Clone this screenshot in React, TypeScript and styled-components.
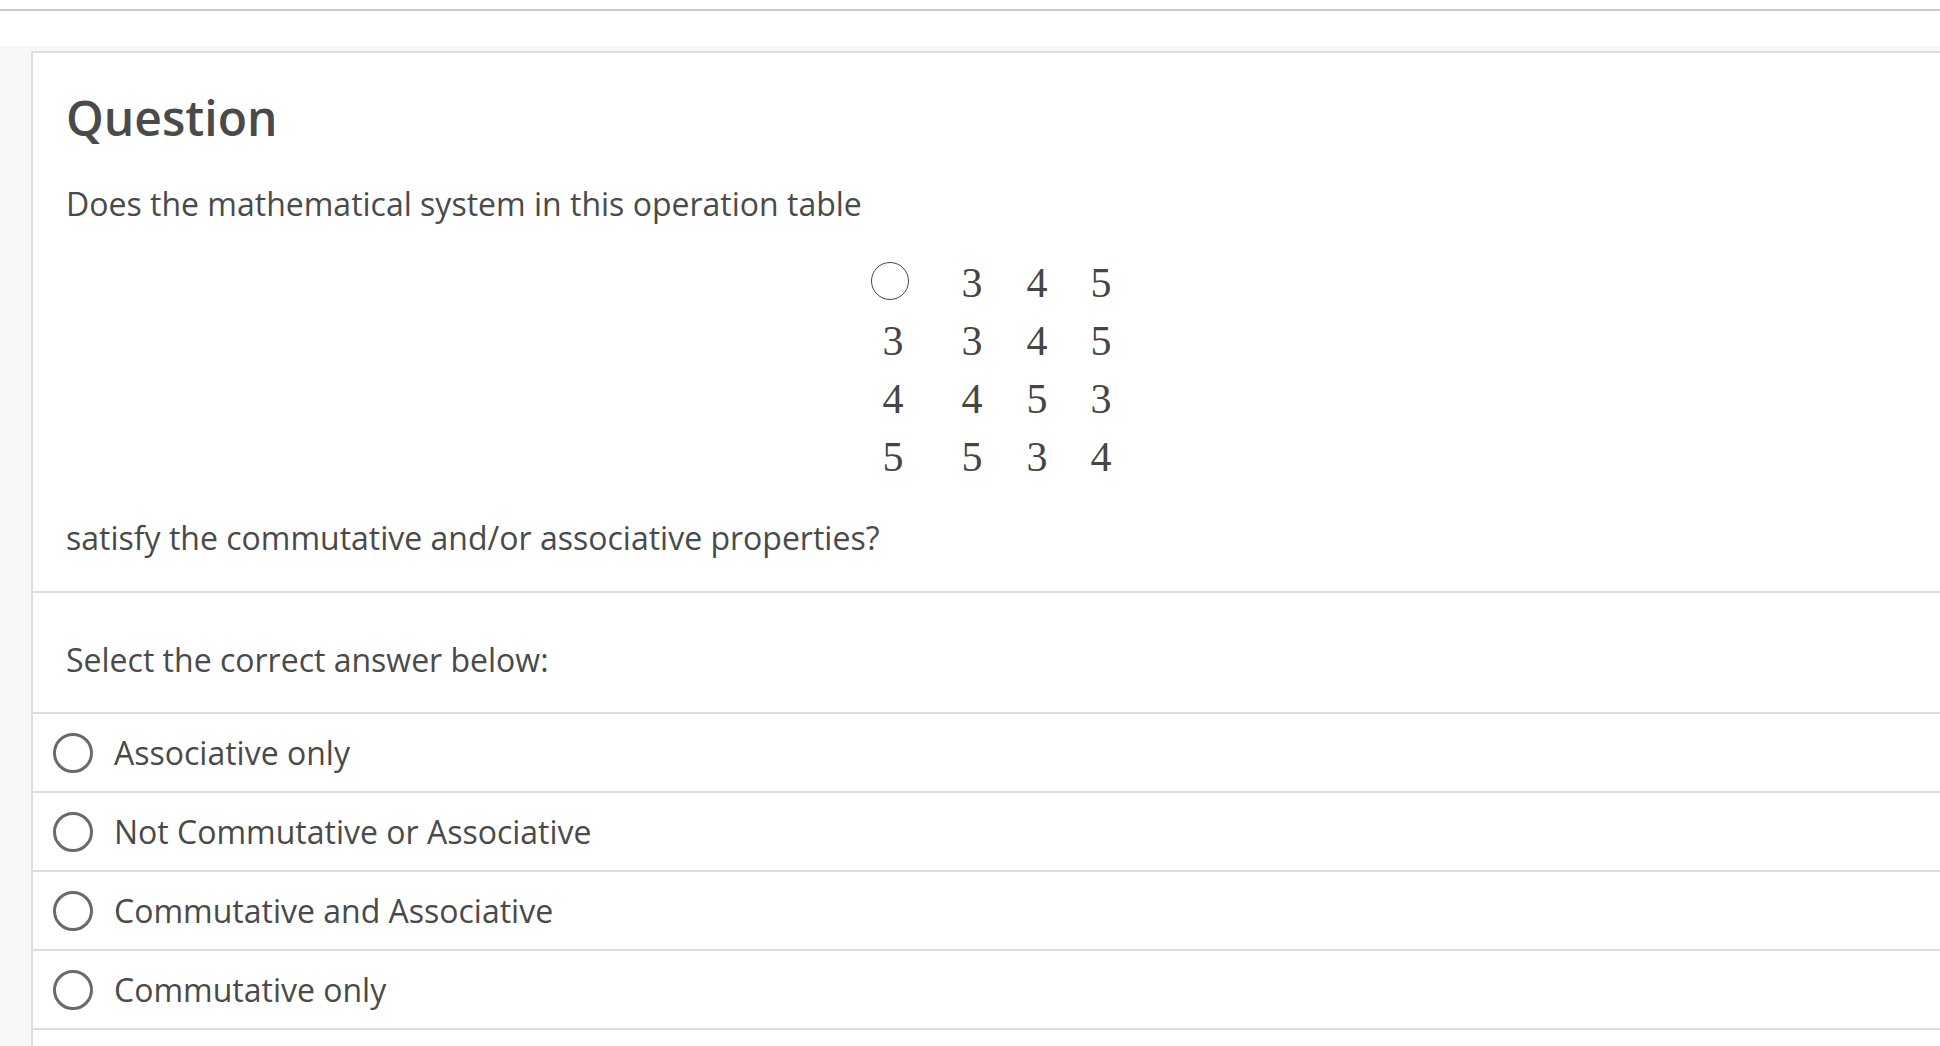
import React from "react";
import styled, { createGlobalStyle } from "styled-components";

const GlobalStyle = createGlobalStyle`
  html, body {
    margin: 0;
    padding: 0;
    background: #ffffff;
    overflow: hidden;
  }
  body {
    font-family: "Open Sans", "Noto Sans", sans-serif;
    color: #4a4a4a;
  }
`;

const TopBar = styled.div`
  height: 9px;
  border-bottom: 2px solid #c8cacd;
  background: #ffffff;
`;

const Stage = styled.main`
  margin-top: 35px;
  background: #f7f7f7;
  padding: 5px 0 0 31px;
  min-height: 1100px;
`;

const Card = styled.section`
  background: #ffffff;
  border: 2px solid #dddddd;
  border-radius: 3px 0 0 0;
  margin-right: -9px;
  min-height: 1100px;
`;

const QuestionBlock = styled.div`
  padding: 36px 33px 29px;
`;

const Title = styled.h2`
  margin: 0;
  font-size: 48px;
  line-height: 58px;
  font-weight: 600;
  color: #4a4a4a;
`;

const Prompt = styled.p<{ $top?: number }>`
  margin: ${(p) => p.$top ?? 0}px 0 0;
  font-size: 32px;
  line-height: 48px;
  font-weight: 400;
  color: #4a4a4a;
`;

const OpTable = styled.div`
  display: grid;
  grid-template-columns: 92px 66px 64px 64px;
  grid-auto-rows: 58px;
  width: 286px;
  margin: 26px auto 28px;
  font-family: "Liberation Serif", "Times New Roman", serif;
  font-size: 42px;
  line-height: 58px;
  color: #454545;
`;

const Cell = styled.span`
  display: flex;
  justify-content: center;
  align-items: center;
`;

const OpCircle = styled.span`
  display: block;
  width: 36px;
  height: 36px;
  margin: 0 6px 4px 0;
  border: 1.3px solid #454545;
  border-radius: 50%;
`;

const AnswerHeader = styled.div`
  border-top: 2px solid #dddddd;
  padding: 43px 33px 28px;
  font-size: 32px;
  line-height: 48px;
  color: #4a4a4a;
`;

const OptionList = styled.ul`
  list-style: none;
  margin: 0;
  padding: 0;
  border-bottom: 2px solid #dddddd;
`;

const Option = styled.li`
  display: flex;
  align-items: center;
  gap: 21px;
  height: 77px;
  padding-left: 20px;
  border-top: 2px solid #dddddd;
  font-size: 32px;
  color: #4a4a4a;
  cursor: pointer;
`;

const Radio = styled.span`
  box-sizing: border-box;
  flex: none;
  width: 40px;
  height: 40px;
  border: 3px solid #6a6a6a;
  border-radius: 50%;
  background: #ffffff;
`;

const tableRows: string[][] = [
  ["3", "3", "4", "5"],
  ["4", "4", "5", "3"],
  ["5", "5", "3", "4"],
];

const options = [
  "Associative only",
  "Not Commutative or Associative",
  "Commutative and Associative",
  "Commutative only",
];

export default function App() {
  return (
    <>
      <GlobalStyle />
      <TopBar />
      <Stage>
        <Card>
          <QuestionBlock>
            <Title>Question</Title>
            <Prompt $top={33}>Does the mathematical system in this operation table</Prompt>
            <OpTable>
              <Cell>
                <OpCircle />
              </Cell>
              <Cell>3</Cell>
              <Cell>4</Cell>
              <Cell>5</Cell>
              {tableRows.map((row, r) =>
                row.map((v, c) => <Cell key={`${r}-${c}`}>{v}</Cell>)
              )}
            </OpTable>
            <Prompt>satisfy the commutative and/or associative properties?</Prompt>
          </QuestionBlock>
          <AnswerHeader>Select the correct answer below:</AnswerHeader>
          <OptionList>
            {options.map((o) => (
              <Option key={o}>
                <Radio />
                <span>{o}</span>
              </Option>
            ))}
          </OptionList>
        </Card>
      </Stage>
    </>
  );
}
